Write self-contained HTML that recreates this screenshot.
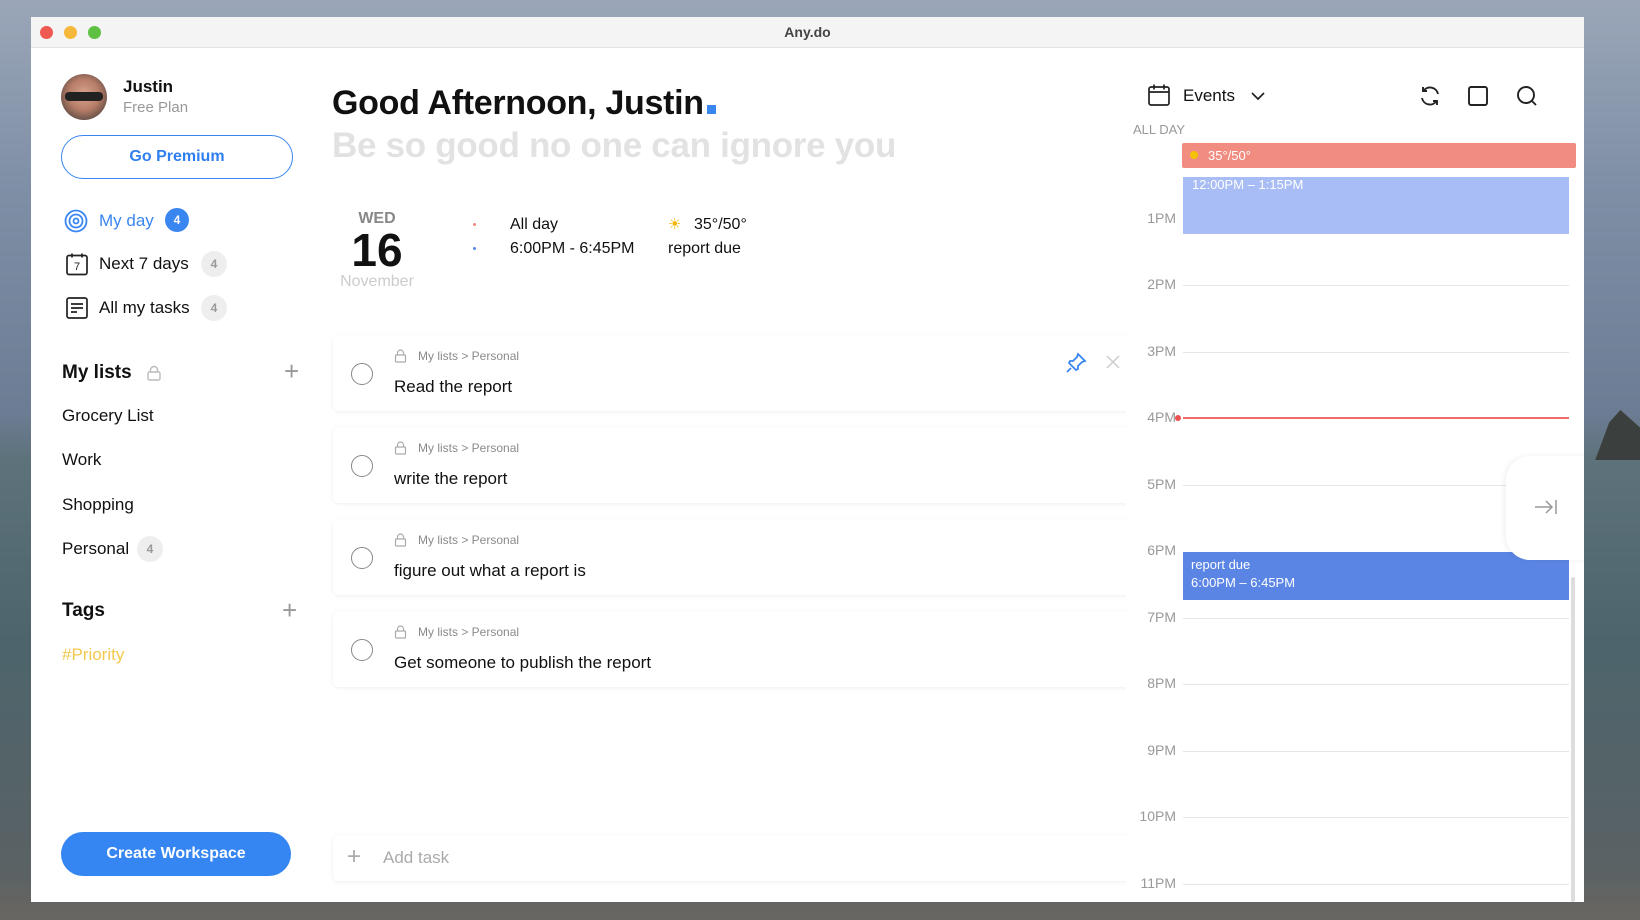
<!DOCTYPE html>
<html><head><meta charset="utf-8"><style>
*{margin:0;padding:0;box-sizing:border-box}
body{width:1640px;height:920px;position:relative;overflow:hidden;font-family:"Liberation Sans",Arial,sans-serif;
background:linear-gradient(180deg,#9aa6b8 0%,#7f8fa6 20%,#6c7c93 45%,#5d727a 50%,#4d646c 70%,#5a6264 95%,#6a6661 100%);}
.a{position:absolute}
.win{left:31px;top:17px;width:1553px;height:885px;background:#fff;overflow:hidden}
.tb{left:0;top:0;width:1553px;height:31px;background:#f3f4f3;border-bottom:1px solid #e4e4e4}
.dot{width:13px;height:13px;border-radius:50%;top:9px}
.t{white-space:nowrap}
.badge{border-radius:50%;width:26px;height:26px;font-size:12px;text-align:center;line-height:26px;font-weight:bold}
.card{left:302px;width:800px;height:76px;background:#fff;border-radius:6px;box-shadow:0 1px 4px rgba(0,0,0,.07)}
.circ{left:18px;top:28px;width:22px;height:22px;border:1.5px solid #888;border-radius:50%}
.bc{left:61px;top:14px;font-size:12px;color:#8a8a8a}
.tt{left:61px;top:42px;font-size:17px;color:#111}
.hr{left:1055px;width:90px;text-align:right;font-size:14px;color:#999}
.ln{left:1152px;width:386px;height:1px;background:#e6e6e6}
</style></head><body>
<div class="a" style="left:1584px;top:410px;width:56px;height:50px;background:#3b3f3d;clip-path:polygon(20% 100%,45% 25%,65% 0,100% 35%,100% 100%)"></div>
<div class="a win">
 <div class="a tb">
  <div class="a dot" style="left:9px;background:#ee5a52"></div>
  <div class="a dot" style="left:33px;background:#f5b83a"></div>
  <div class="a dot" style="left:57px;background:#5ec144"></div>
  <div class="a t" style="left:0;width:1553px;text-align:center;top:7px;font-size:14px;font-weight:bold;color:#444">Any.do</div>
 </div>
 <!-- sidebar -->
 <div class="a" style="left:30px;top:57px;width:46px;height:46px;border-radius:50%;background:radial-gradient(circle at 50% 45%,#d9a58f 0,#b77d68 45%,#5b4a44 80%)"></div>
 <div class="a" style="left:34px;top:75px;width:38px;height:9px;background:#222;border-radius:4px"></div>
 <div class="a t" style="left:92px;top:60px;font-size:17px;font-weight:bold;color:#111">Justin</div>
 <div class="a t" style="left:92px;top:82px;font-size:15px;color:#999">Free Plan</div>
 <div class="a" style="left:30px;top:118px;width:232px;height:44px;border:1.5px solid #3a86f0;border-radius:22px;color:#2f7ff0;font-weight:bold;font-size:16px;text-align:center;line-height:41px">Go Premium</div>
 <svg class="a" style="left:33px;top:192px" width="24" height="24" viewBox="0 0 24 24" fill="none" stroke="#3a86f0" stroke-width="1.8"><circle cx="12" cy="12" r="10.5"/><circle cx="12" cy="12" r="6.5"/><circle cx="12" cy="12" r="2.5"/></svg>
 <div class="a t" style="left:68px;top:194px;font-size:17px;color:#3a86f0">My day</div>
 <div class="a badge" style="left:134px;top:191px;background:#3a86f0;color:#fff;width:24px;height:24px;line-height:24px">4</div>
 <svg class="a" style="left:34px;top:235px" width="24" height="24" viewBox="0 0 24 24" fill="none" stroke="#222" stroke-width="1.7"><rect x="2" y="3.5" width="20" height="19" rx="2"/><path d="M7 1.5v4M17 1.5v4"/><text x="12" y="18" font-size="11" text-anchor="middle" fill="#222" stroke="none" font-family="Liberation Sans">7</text></svg>
 <div class="a t" style="left:68px;top:237px;font-size:17px;color:#111">Next 7 days</div>
 <div class="a badge" style="left:170px;top:234px;background:#eee;color:#999">4</div>
 <svg class="a" style="left:34px;top:279px" width="24" height="24" viewBox="0 0 24 24" fill="none" stroke="#222" stroke-width="1.7"><rect x="2" y="2" width="20" height="20" rx="2"/><path d="M6 8h12M6 12h12M6 16h6"/></svg>
 <div class="a t" style="left:68px;top:281px;font-size:17px;color:#111">All my tasks</div>
 <div class="a badge" style="left:170px;top:278px;background:#eee;color:#999">4</div>
 <div class="a t" style="left:31px;top:345px;font-size:19px;font-weight:bold;color:#111">My lists</div>
 <svg class="a" style="left:115px;top:348px" width="16" height="16" viewBox="0 0 16 16" fill="none" stroke="#bbb" stroke-width="1.4"><rect x="2" y="7" width="12" height="8" rx="1.5"/><path d="M4.5 7V5a3.5 3.5 0 0 1 7 0v2"/></svg>
 <div class="a t" style="left:253px;top:339px;font-size:26px;color:#999;font-weight:300">+</div>
 <div class="a t" style="left:31px;top:389px;font-size:17px;color:#111">Grocery List</div>
 <div class="a t" style="left:31px;top:433px;font-size:17px;color:#111">Work</div>
 <div class="a t" style="left:31px;top:478px;font-size:17px;color:#111">Shopping</div>
 <div class="a t" style="left:31px;top:522px;font-size:17px;color:#111">Personal</div>
 <div class="a badge" style="left:106px;top:519px;background:#eee;color:#999">4</div>
 <div class="a t" style="left:31px;top:583px;font-size:19px;font-weight:bold;color:#111">Tags</div>
 <div class="a t" style="left:251px;top:578px;font-size:26px;color:#999">+</div>
 <div class="a t" style="left:31px;top:628px;font-size:17px;color:#f2c94c">#Priority</div>
 <div class="a" style="left:30px;top:815px;width:230px;height:44px;background:#3585f2;border-radius:22px;color:#fff;font-weight:bold;font-size:16px;text-align:center;line-height:44px">Create Workspace</div>
 <!-- main -->
 <div class="a t" style="left:301px;top:67px;font-size:34px;font-weight:bold;color:#111;letter-spacing:-.3px">Good Afternoon, Justin<span style="display:inline-block;width:9px;height:9px;background:#3a86f0;margin-left:3px"></span></div>
 <div class="a t" style="left:301px;top:109px;font-size:35px;font-weight:bold;color:#e2e2e2;letter-spacing:-.3px">Be so good no one can ignore you</div>
 <div class="a t" style="left:316px;width:60px;text-align:center;top:193px;font-size:16px;font-weight:bold;color:#888">WED</div>
 <div class="a t" style="left:306px;width:80px;text-align:center;top:206px;font-size:46px;font-weight:bold;color:#111">16</div>
 <div class="a t" style="left:301px;width:90px;text-align:center;top:256px;font-size:16px;color:#ccc">November</div>
 <div class="a" style="left:442px;top:206px;width:3px;height:3px;border-radius:50%;background:#f08a80"></div>
 <div class="a" style="left:442px;top:230px;width:3px;height:3px;border-radius:50%;background:#5b85e5"></div>
 <div class="a t" style="left:479px;top:199px;font-size:16px;color:#111">All day</div>
 <div class="a t" style="left:479px;top:223px;font-size:16px;color:#111">6:00PM - 6:45PM</div>
 <div class="a t" style="left:637px;top:198px;font-size:15px;color:#f5b400">☀</div>
 <div class="a t" style="left:663px;top:199px;font-size:16px;color:#111">35°/50°</div>
 <div class="a t" style="left:637px;top:223px;font-size:16px;color:#111">report due</div>
 <div class="a card" style="top:318px">
  <div class="a circ"></div>
  <svg class="a" style="left:61px;top:14px" width="13" height="14" viewBox="0 0 13 14" fill="none" stroke="#aaa" stroke-width="1.2"><rect x="1.5" y="6" width="10" height="7" rx="1"/><path d="M3.5 6V4a3 3 0 0 1 6 0v2"/></svg>
  <div class="a t bc" style="left:85px">My lists &gt; Personal</div>
  <div class="a t tt">Read the report</div>
  <svg class="a" style="left:731px;top:16px" width="24" height="24" viewBox="0 0 24 24" fill="none" stroke="#3a86f0" stroke-width="1.8"><path d="M14 3l7 7-3 1-4 4 0 3-2 1-7-7 1-2h3l4-4z"/><path d="M7 17l-4 4"/></svg>
  <svg class="a" style="left:772px;top:19px" width="16" height="16" viewBox="0 0 16 16" stroke="#ccc" stroke-width="1.5"><path d="M2 2l12 12M14 2L2 14"/></svg>
 </div>
 <div class="a card" style="top:410px"><div class="a circ"></div><svg class="a" style="left:61px;top:14px" width="13" height="14" viewBox="0 0 13 14" fill="none" stroke="#aaa" stroke-width="1.2"><rect x="1.5" y="6" width="10" height="7" rx="1"/><path d="M3.5 6V4a3 3 0 0 1 6 0v2"/></svg><div class="a t bc" style="left:85px">My lists &gt; Personal</div><div class="a t tt">write the report</div></div>
 <div class="a card" style="top:502px"><div class="a circ"></div><svg class="a" style="left:61px;top:14px" width="13" height="14" viewBox="0 0 13 14" fill="none" stroke="#aaa" stroke-width="1.2"><rect x="1.5" y="6" width="10" height="7" rx="1"/><path d="M3.5 6V4a3 3 0 0 1 6 0v2"/></svg><div class="a t bc" style="left:85px">My lists &gt; Personal</div><div class="a t tt">figure out what a report is</div></div>
 <div class="a card" style="top:594px"><div class="a circ"></div><svg class="a" style="left:61px;top:14px" width="13" height="14" viewBox="0 0 13 14" fill="none" stroke="#aaa" stroke-width="1.2"><rect x="1.5" y="6" width="10" height="7" rx="1"/><path d="M3.5 6V4a3 3 0 0 1 6 0v2"/></svg><div class="a t bc" style="left:85px">My lists &gt; Personal</div><div class="a t tt">Get someone to publish the report</div></div>
 <div class="a card" style="top:818px;height:46px">
  <div class="a t" style="left:14px;top:8px;font-size:24px;color:#aaa;font-weight:300">+</div>
  <div class="a t" style="left:50px;top:13px;font-size:17px;color:#aaa">Add task</div>
 </div>
 <!-- right panel -->
 <div class="a" style="left:1095px;top:31px;width:458px;height:854px;background:#fff"></div>
 <svg class="a" style="left:1116px;top:66px" width="24" height="24" viewBox="0 0 24 24" fill="none" stroke="#222" stroke-width="1.7"><rect x="2" y="4" width="20" height="18" rx="2"/><path d="M2 9h20M7 1.5v5M17 1.5v5"/></svg>
 <div class="a t" style="left:1152px;top:69px;font-size:17px;color:#111">Events</div>
 <svg class="a" style="left:1219px;top:73px" width="16" height="12" viewBox="0 0 16 12" fill="none" stroke="#222" stroke-width="1.7"><path d="M2 3l6 6 6-6"/></svg>
 <svg class="a" style="left:1387px;top:67px" width="24" height="24" viewBox="0 0 24 24" fill="none" stroke="#222" stroke-width="1.9"><path d="M20 10a8 8 0 0 0-14.5-3M4 14a8 8 0 0 0 14.5 3"/><path d="M5 3v4h4M19 21v-4h-4"/></svg>
 <svg class="a" style="left:1436px;top:68px" width="22" height="22" viewBox="0 0 22 22" fill="none" stroke="#222" stroke-width="1.9"><rect x="2" y="2" width="18" height="18" rx="2"/></svg>
 <svg class="a" style="left:1484px;top:67px" width="24" height="24" viewBox="0 0 24 24" fill="none" stroke="#222" stroke-width="1.9"><circle cx="11" cy="11" r="8"/><path d="M17 17l4 4"/></svg>
 <div class="a t" style="left:1102px;top:105px;font-size:13px;color:#999">ALL DAY</div>
 <div class="a" style="left:1151px;top:126px;width:394px;height:25px;background:#f08c80;border-radius:2px"></div>
 <div class="a" style="left:1159px;top:134px;width:8px;height:8px;border-radius:50%;background:#f5c200"></div>
 <div class="a t" style="left:1177px;top:131px;font-size:13px;color:#fff">35°/50°</div>
 <div class="a" style="left:1152px;top:160px;width:386px;height:57px;background:#a8bcf5"></div>
 <div class="a t" style="left:1161px;top:160px;font-size:13px;color:#fff">12:00PM – 1:15PM</div>
 <div class="a t hr" style="top:193px">1PM</div>
 <div class="a t hr" style="top:259px">2PM</div><div class="a ln" style="top:268px"></div>
 <div class="a t hr" style="top:326px">3PM</div><div class="a ln" style="top:335px"></div>
 <div class="a t hr" style="top:392px">4PM</div><div class="a" style="left:1152px;top:400px;width:386px;height:1.5px;background:#ef6b6b"></div><div class="a" style="left:1144px;top:398px;width:6px;height:6px;border-radius:50%;background:#ef5050"></div>
 <div class="a t hr" style="top:459px">5PM</div><div class="a ln" style="top:468px"></div>
 <div class="a t hr" style="top:525px">6PM</div>
 <div class="a" style="left:1152px;top:535px;width:386px;height:48px;background:#5b85e5"></div>
 <div class="a t" style="left:1160px;top:540px;font-size:13px;color:#fff">report due</div>
 <div class="a t" style="left:1160px;top:558px;font-size:13px;color:#fff">6:00PM – 6:45PM</div>
 <div class="a t hr" style="top:592px">7PM</div><div class="a ln" style="top:601px"></div>
 <div class="a t hr" style="top:658px">8PM</div><div class="a ln" style="top:667px"></div>
 <div class="a t hr" style="top:725px">9PM</div><div class="a ln" style="top:734px"></div>
 <div class="a t hr" style="top:791px">10PM</div><div class="a ln" style="top:800px"></div>
 <div class="a t hr" style="top:858px">11PM</div><div class="a ln" style="top:867px"></div>
 <div class="a" style="left:1540px;top:560px;width:4px;height:325px;background:#ddd;border-radius:2px"></div>
 <div class="a" style="left:1475px;top:439px;width:90px;height:104px;background:#fff;border-radius:24px 0 0 24px;box-shadow:-2px 0 6px rgba(0,0,0,.06)"></div>
 <svg class="a" style="left:1502px;top:481px" width="26" height="18" viewBox="0 0 26 18" fill="none" stroke="#999" stroke-width="1.5"><path d="M2 9h17M13 3l6 6-6 6M23 2v14"/></svg>
</div>
</body></html>
